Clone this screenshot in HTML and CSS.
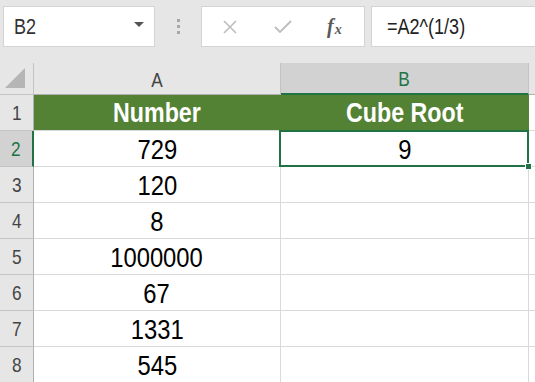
FILE: index.html
```html
<!DOCTYPE html>
<html lang="en">
<head>
    <meta charset="UTF-8">
    <title>Cube Root - Sheet</title>
    <link rel="stylesheet" href="styles.css">
</head>
<body>

    <div class="toolbar">
        <div class="name-box">
            <span class="n left">B2</span>
            <span class="caret"></span>
        </div>
        <div class="grip">
            <span></span><span></span><span></span>
        </div>
        <div class="func-box">
            <svg class="icon" width="16" height="16" viewBox="0 0 16 16">
                <path d="M2 2 L14 14 M14 2 L2 14" stroke="#bdbdbd" stroke-width="1.6" fill="none"/>
            </svg>
            <svg class="icon" width="20" height="16" viewBox="0 0 20 16">
                <path d="M2 8 L7 13 L18 2" stroke="#bdbdbd" stroke-width="1.8" fill="none"/>
            </svg>
            <span class="fx">f<span class="fx-x">x</span></span>
        </div>
        <div class="formula"><span class="n left">=A2^(1/3)</span></div>
    </div>

    <div class="sheet">
        <div class="corner"><span class="tri"></span></div>
        <div class="col-head"><span class="n">A</span></div>
        <div class="col-head active"><span class="n">B</span></div>
        <div class="col-head rest"></div>

        <div class="row-head"><span class="n">1</span></div>
        <div class="cell title"><span class="n">Number</span></div>
        <div class="cell title"><span class="n">Cube Root</span></div>
        <div class="cell rest"></div>

        <div class="row-head active"><span class="n">2</span></div>
        <div class="cell"><span class="n">729</span></div>
        <div class="cell selected"><span class="n">9</span></div>
        <div class="cell rest"></div>

        <div class="row-head"><span class="n">3</span></div>
        <div class="cell"><span class="n">120</span></div>
        <div class="cell"></div>
        <div class="cell rest"></div>

        <div class="row-head"><span class="n">4</span></div>
        <div class="cell"><span class="n">8</span></div>
        <div class="cell"></div>
        <div class="cell rest"></div>

        <div class="row-head"><span class="n">5</span></div>
        <div class="cell"><span class="n">1000000</span></div>
        <div class="cell"></div>
        <div class="cell rest"></div>

        <div class="row-head"><span class="n">6</span></div>
        <div class="cell"><span class="n">67</span></div>
        <div class="cell"></div>
        <div class="cell rest"></div>

        <div class="row-head"><span class="n">7</span></div>
        <div class="cell"><span class="n">1331</span></div>
        <div class="cell"></div>
        <div class="cell rest"></div>

        <div class="row-head"><span class="n">8</span></div>
        <div class="cell"><span class="n">545</span></div>
        <div class="cell"></div>
        <div class="cell rest"></div>
    </div>

</body>
</html>
```

FILE: styles.css
```css
/* Global Styles */
body {
    font-family: "Liberation Sans", Arial, sans-serif;
    background-color: #e6e6e6;
    color: #000000;
    margin: 0;
    padding: 0;
    overflow: hidden;
}

/* narrow face (no Arial Narrow available) */
.n {
    display: inline-block;
    transform: scaleX(0.82);
    white-space: nowrap;
}

.n.left {
    transform-origin: left center;
}

/* Formula bar */
.toolbar {
    display: flex;
    align-items: stretch;
    height: 41px;
    padding: 6px 0 16px 3px;
}

.name-box {
    width: 152px;
    box-sizing: border-box;
    background-color: #ffffff;
    border: 1px solid #d4d4d4;
    display: flex;
    align-items: center;
    justify-content: space-between;
    padding: 0 10px 0 10px;
    font-size: 22px;
    color: #333;
}

.caret {
    width: 0;
    height: 0;
    border-left: 5px solid transparent;
    border-right: 5px solid transparent;
    border-top: 5px solid #555;
    margin-top: -4px;
}

.grip {
    width: 46px;
    display: flex;
    flex-direction: column;
    align-items: center;
    justify-content: center;
    gap: 3px;
}

.grip span {
    width: 3px;
    height: 3px;
    background-color: #a8a8a8;
}

.func-box {
    width: 164px;
    box-sizing: border-box;
    background-color: #ffffff;
    border: 1px solid #d4d4d4;
    display: flex;
    align-items: center;
    padding-left: 20px;
}

.func-box .icon + .icon {
    margin-left: 35px;
}

.fx {
    margin-left: 34px;
    font-family: "Liberation Serif", serif;
    font-style: italic;
    font-weight: bold;
    font-size: 20px;
    color: #5a5a5a;
}

.fx-x {
    font-size: 14px;
    margin-left: 1px;
    position: relative;
    top: 1px;
}

.formula {
    flex: 1;
    margin-left: 6px;
    margin-right: -4px;
    background-color: #ffffff;
    border: 1px solid #d4d4d4;
    display: flex;
    align-items: center;
    padding-left: 15px;
    font-size: 22px;
    color: #222;
}

/* Grid */
.sheet {
    display: grid;
    grid-template-columns: 34px 247px 248px 1fr;
    grid-template-rows: 32px;
    grid-auto-rows: 36px;
}

.sheet > div {
    box-sizing: border-box;
    display: flex;
    align-items: center;
    justify-content: center;
}

.corner {
    border-right: 1px solid #c4c4c4;
    border-bottom: 1px solid #c4c4c4;
    align-items: flex-start !important;
}

.tri {
    width: 0;
    height: 0;
    margin-top: 5px;
    margin-left: -4px;
    border-left: 20px solid transparent;
    border-bottom: 20px solid #b5b5b5;
}

.col-head {
    font-size: 21px;
    color: #444;
    border-right: 1px solid #c4c4c4;
    border-bottom: 1px solid #b0b0b0;
    padding-top: 2px;
}

.col-head.active {
    background-color: #d2d2d2;
    color: #217346;
    border-bottom: 2px solid #217346;
}

.col-head.rest {
    border-right: none;
}

.row-head {
    font-size: 21px;
    color: #444;
    border-right: 1px solid #b0b0b0;
    border-bottom: 1px solid #c4c4c4;
}

.row-head.active {
    background-color: #d2d2d2;
    color: #217346;
    border-right: 2px solid #217346;
}

.cell {
    background-color: #ffffff;
    font-size: 28px;
    border-right: 1px solid #dadada;
    border-bottom: 1px solid #dadada;
}

.cell .n {
    transform: scaleX(0.85);
    padding-top: 2px;
}

.cell.title {
    background-color: #548235;
    color: #ffffff;
    font-weight: bold;
    border-right-color: #548235;
}

.cell.title .n {
    transform: scaleX(0.83);
    padding-top: 0;
}

.cell.rest {
    border-right: none;
}

.cell.selected {
    position: relative;
}

.cell.selected::before {
    content: "";
    position: absolute;
    left: -2px;
    top: -1px;
    right: -1px;
    bottom: -1px;
    border: 2px solid #217346;
}

.cell.selected::after {
    content: "";
    position: absolute;
    right: -4px;
    bottom: -4px;
    width: 7px;
    height: 7px;
    background-color: #217346;
    border: 1px solid #ffffff;
    box-sizing: border-box;
}
```
